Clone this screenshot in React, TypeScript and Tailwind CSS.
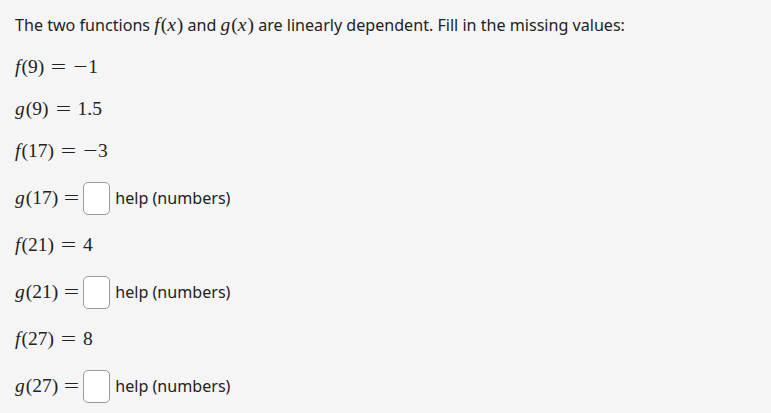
import React from "react";

const M = ({ children }: { children: React.ReactNode }) => (
  <span className="text-[19.5px] leading-none" style={{ fontFamily: '"Liberation Serif", "DejaVu Serif", serif' }}>
    {children}
  </span>
);

const I = ({ children }: { children: React.ReactNode }) => <i className="mr-[1px] italic">{children}</i>;

const Eq = ({ tight }: { tight?: boolean }) => (
  <span className={`${tight ? "ml-[8px] mr-[8px]" : "mx-[9px]"} inline-block scale-x-[1.4]`}>=</span>
);

const Blank = () => (
  <span className="ml-[-2px] mr-[5px] inline-block h-[33px] w-[27px] rounded-[5px] border border-[#9a9a9a] bg-white" />
);

type Row = { fn: "f" | "g"; x: number; v?: string };

const rows: Row[] = [
  { fn: "f", x: 9, v: "\u22121" },
  { fn: "g", x: 9, v: "1.5" },
  { fn: "f", x: 17, v: "\u22123" },
  { fn: "g", x: 17 },
  { fn: "f", x: 21, v: "4" },
  { fn: "g", x: 21 },
  { fn: "f", x: 27, v: "8" },
  { fn: "g", x: 27 },
];

const Value = ({ v }: { v: string }) =>
  v.startsWith("\u2212") ? (
    <>
      <span className="mx-[2px] inline-block scale-x-[1.3]">{"\u2212"}</span>
      {v.slice(1)}
    </>
  ) : (
    <>{v}</>
  );

export default function App() {
  return (
    <div
      className="min-h-[413px] w-full bg-[#f5f5f5] px-[15px] pt-[12px] text-[16.1px] text-[#222]"
      style={{ fontFamily: '"Noto Sans", "Open Sans", sans-serif' }}
    >
      <p className="h-[26px] leading-[26px]">
        The two functions{" "}
        <M>
          <I>f</I>(<I>x</I>)
        </M>{" "}
        and{" "}
        <M>
          <I>g</I>(<I>x</I>)
        </M>{" "}
        are linearly dependent. Fill in the missing values:
      </p>
      {rows.map((r, i) =>
        r.v !== undefined ? (
          <div key={i} className="mt-[16px] flex h-[26px] items-center">
            <M>
              <I>{r.fn}</I>({r.x})<Eq />
              <Value v={r.v} />
            </M>
          </div>
        ) : (
          <div key={i} className="mt-[16px] flex h-[36px] items-center">
            <M>
              <I>{r.fn}</I>({r.x})<Eq tight />
            </M>
            <Blank />
            <span>help (numbers)</span>
          </div>
        )
      )}
    </div>
  );
}
